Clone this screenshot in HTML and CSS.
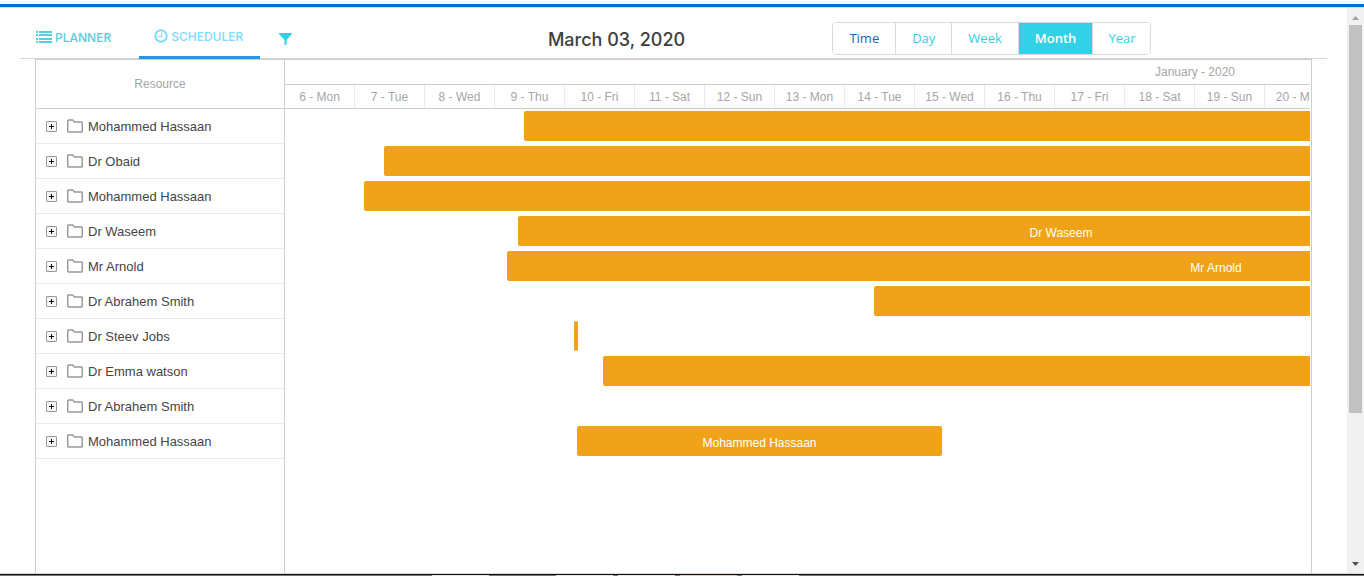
FILE: index.html
```html
<!DOCTYPE html>
<html lang="en">
<head>
  <meta charset="UTF-8" />
  <meta name="viewport" content="width=device-width, initial-scale=1.0"/>
  <title>Scheduler</title>
  <link rel="stylesheet" href="styles.css">
</head>
<body>
  <div class="modal">
    <div class="content">
      <!-- Toolbar -->
      <div class="toolbar">
        <nav class="tabs">
          <a href="#planner" class="tab planner">
            <svg width="16" height="13" viewBox="0 0 16 13" fill="currentColor"><path d="M0 0h2v2H0zM3 0h13v2H3zM0 3h2v2H0zM3 3h13v2H3zM0 7h2v2H0zM3 7h13v2H3zM0 10h2v2H0zM3 10h13v2H3z"/></svg>
            <span>PLANNER</span>
          </a>
          <a href="#scheduler" class="tab scheduler">
            <svg width="14" height="14" viewBox="0 0 14 14" fill="none" stroke="currentColor"><circle cx="7" cy="7" r="5.7" stroke-width="2"/><path d="M7.5 3.5v4H4.5" stroke-width="1.2"/></svg>
            <span>SCHEDULER</span>
          </a>
          <button type="button" class="filter" aria-label="Filter">
            <svg width="14" height="13" viewBox="0 0 14 13" fill="currentColor"><path d="M0 1h13v1L7.500 8v5h-2V8L0 2z"/></svg>
          </button>
        </nav>
        <h1 class="title">March 03, 2020</h1>
        <div class="views">
          <div class="button-group">
            <button type="button" class="view time">Time</button>
            <button type="button" class="view">Day</button>
            <button type="button" class="view">Week</button>
            <button type="button" class="view active">Month</button>
            <button type="button" class="view">Year</button>
          </div>
        </div>
      </div>

      <!-- Gantt -->
      <div class="gantt">
        <div class="resources">
          <table class="grid">
            <thead>
              <tr><th>Resource</th></tr>
            </thead>
            <tbody id="resource-rows"></tbody>
          </table>
        </div>
        <div class="timeline">
          <div class="months"><div class="month">January - 2020</div></div>
          <div class="days" id="days"></div>
          <div class="bars" id="bars"></div>
        </div>
      </div>
    </div>

    <div class="scrollbar">
      <svg width="7" height="4" viewBox="0 0 7 4" fill="#a3a3a3"><path d="M0 4L3.500 0L7 4z"/></svg>
      <div class="track"><div class="thumb"></div></div>
      <svg width="7" height="4" viewBox="0 0 7 4" fill="#505050"><path d="M0 0h7L3.500 4z"/></svg>
    </div>
  </div>
  <div class="bottom-edge">
    <span class="segment first"></span>
    <span class="segment second"></span>
    <span class="segment"></span>
    <span class="segment pink"></span>
    <span class="segment"></span>
  </div>

  <script>
    const weekdays = ['Sun', 'Mon', 'Tue', 'Wed', 'Thu', 'Fri', 'Sat'];

    // start and width are in pixels, one day is 70px
    const resources = [
      { name: 'Mohammed Hassaan', start: 239, width: 1581 },
      { name: 'Dr Obaid', start: 99, width: 1721 },
      { name: 'Mohammed Hassaan', start: 79, width: 1741 },
      { name: 'Dr Waseem', start: 233, width: 1086, label: true },
      { name: 'Mr Arnold', start: 222, width: 1418, label: true },
      { name: 'Dr Abrahem Smith', start: 589, width: 1231 },
      { name: 'Dr Steev Jobs', start: 289, width: 4 },
      { name: 'Dr Emma watson', start: 318, width: 1502 },
      { name: 'Dr Abrahem Smith' },
      { name: 'Mohammed Hassaan', start: 292, width: 365, label: true }
    ];

    let days = '';
    for (let d = 6; d <= 20; d++) {
      days += `<div class="day">${d} - ${weekdays[(d + 2) % 7]}</div>`;
    }
    document.getElementById('days').innerHTML = days;

    let rows = '';
    let bars = '';
    for (const r of resources) {
      rows += `<tr><td><div class="cell">
        <button type="button" class="expand" aria-label="Expand"><svg width="5" height="5" viewBox="0 0 5 5"><path d="M0 2h5v1H0zM2 0h1v5H2z"/></svg></button>
        <svg class="folder" width="16" height="14" viewBox="0 0 16 14" fill="none" stroke="#999" stroke-width="1.500"><path d="M1.700 1h4l1.800 2h6.800q1 0 1 1v8q0 1-1 1H1.700q-1 0-1-1V2q0-1 1-1z"/></svg>
        <span>${r.name}</span></div></td></tr>`;
      bars += '<div class="bar-row">';
      if (r.width) {
        bars += `<div class="bar" style="margin-left: ${r.start}px; width: ${r.width}px">${r.label ? r.name : ''}</div>`;
      }
      bars += '</div>';
    }
    document.getElementById('resource-rows').innerHTML = rows;
    document.getElementById('bars').innerHTML = bars;
  </script>
</body>
</html>
```
FILE: styles.css
```css
* {
  box-sizing: border-box;
}

body {
  margin: 0;
  padding-top: 4px;
  min-height: 100vh;
  display: flex;
  flex-direction: column;
  background: #fff;
  font-family: "Liberation Sans", Arial, sans-serif;
}

button {
  font-family: inherit;
  cursor: pointer;
}

.modal {
  flex: 1;
  display: flex;
  border-top: 3px solid #0070d2;
}

.content {
  flex: 1;
  min-width: 0;
  display: flex;
  flex-direction: column;
  padding: 0 20px;
  border-top: 1px solid #ddd;
}

/* Toolbar */
.toolbar {
  display: grid;
  grid-template-columns: 4fr 3fr 5fr;
  height: 51px;
  border-bottom: 1px solid #d8d8d8;
}

.tabs {
  display: flex;
  height: 51px;
  font-family: Inter, sans-serif;
  font-size: 12px;
  font-weight: 500;
}

.tab {
  display: flex;
  align-items: center;
  text-decoration: none;
}

.planner {
  gap: 3px;
  padding: 8px 28px 0 16px;
  color: #5bcadb;
}

.scheduler {
  gap: 3px;
  padding: 8px 17px 0 15px;
  color: #7fdbff;
  border-bottom: 3px solid #2196f3;
}

.filter {
  display: flex;
  align-items: center;
  margin-left: 19px;
  padding: 10px 0 0;
  border: none;
  background: none;
  color: #32d1e6;
}

.title {
  margin: 0;
  padding: 12px 5px 0 0;
  text-align: center;
  font-family: Inter, sans-serif;
  font-size: 18px;
  line-height: 40px;
  font-weight: 500;
  color: #3e3e3c;
}

.views {
  padding: 14px 0 0 50px;
}

.button-group {
  display: inline-flex;
  height: 33px;
  border: 1px solid #dddbda;
  border-radius: 4px;
  overflow: hidden;
}

.view {
  padding: 0 16px 2px;
  border: none;
  border-right: 1px solid #dddbda;
  background: #fff;
  color: #32d1e6;
  font-family: "Open Sans", sans-serif;
  font-size: 13px;
}

.view:last-child {
  padding: 0 15px 2px;
  border-right: none;
}

.time {
  color: #0b6ab8;
}

.active {
  background: #32d1e6;
  color: #fff;
  font-weight: 600;
}

/* Gantt */
.gantt {
  flex: 1;
  display: flex;
  margin: 0 15px;
  border: 1px solid #cecece;
  border-bottom: none;
}

.resources {
  width: 249px;
  flex: none;
  border-right: 1px solid #cecece;
}

.grid {
  width: 100%;
  border-collapse: separate;
  border-spacing: 0;
}

.grid th {
  height: 49px;
  padding: 0;
  border-bottom: 1px solid #cecece;
  font-size: 12px;
  font-weight: normal;
  color: #a6a6a6;
}

.grid td {
  height: 35px;
  padding: 0 0 0 10px;
  border-bottom: 1px solid #ebebeb;
  font-size: 13px;
  color: #454545;
}

.cell {
  display: flex;
  align-items: center;
}

.expand {
  display: flex;
  align-items: center;
  justify-content: center;
  width: 11px;
  height: 11px;
  padding: 0;
  border: 1px solid #999;
  border-radius: 1px;
  background: #f7f7f7;
}

.folder {
  margin: 0 5px 0 10px;
}

.timeline {
  flex: 1;
  min-width: 0;
  margin-right: 1px;
  overflow: hidden;
  font-size: 12px;
}

.months {
  height: 25px;
  border-bottom: 1px solid #cecece;
}

.month {
  width: 1820px;
  line-height: 24px;
  text-align: center;
  color: #a6a6a6;
}

.days {
  display: flex;
  height: 24px;
  border-bottom: 1px solid #cecece;
}

.day {
  flex: none;
  width: 70px;
  border-right: 1px solid #ebebeb;
  line-height: 25px;
  text-align: center;
  color: #a6a6a6;
}

.bar-row {
  display: flex;
  height: 35px;
  padding-top: 2px;
}

.bar {
  flex: none;
  height: 30px;
  border-radius: 2px;
  background: #f0a318;
  line-height: 34px;
  text-align: center;
  color: #fff;
}

/* Scrollbar */
.scrollbar {
  width: 17px;
  display: flex;
  flex-direction: column;
  align-items: center;
  padding: 8px 2px 7px;
  border-top: 1px solid #ddd;
  background: #f1f1f1;
}

.track {
  flex: 1;
  width: 13px;
  margin: 5px 0;
}

.thumb {
  height: 73%;
  background: #c1c1c1;
}

/* Bottom edge */
.bottom-edge {
  display: flex;
  align-items: flex-end;
  gap: 5px;
  height: 3px;
  border-top: 1px solid #d8d8d8;
  background: linear-gradient(#111 50%, #777 50%);
}

.segment {
  width: 57px;
  height: 1px;
  background: #e8e8e8;
}

.first {
  margin-left: 432px;
}

.second {
  margin-left: 62px;
}

.pink {
  background: #f0c4c4;
}
```
